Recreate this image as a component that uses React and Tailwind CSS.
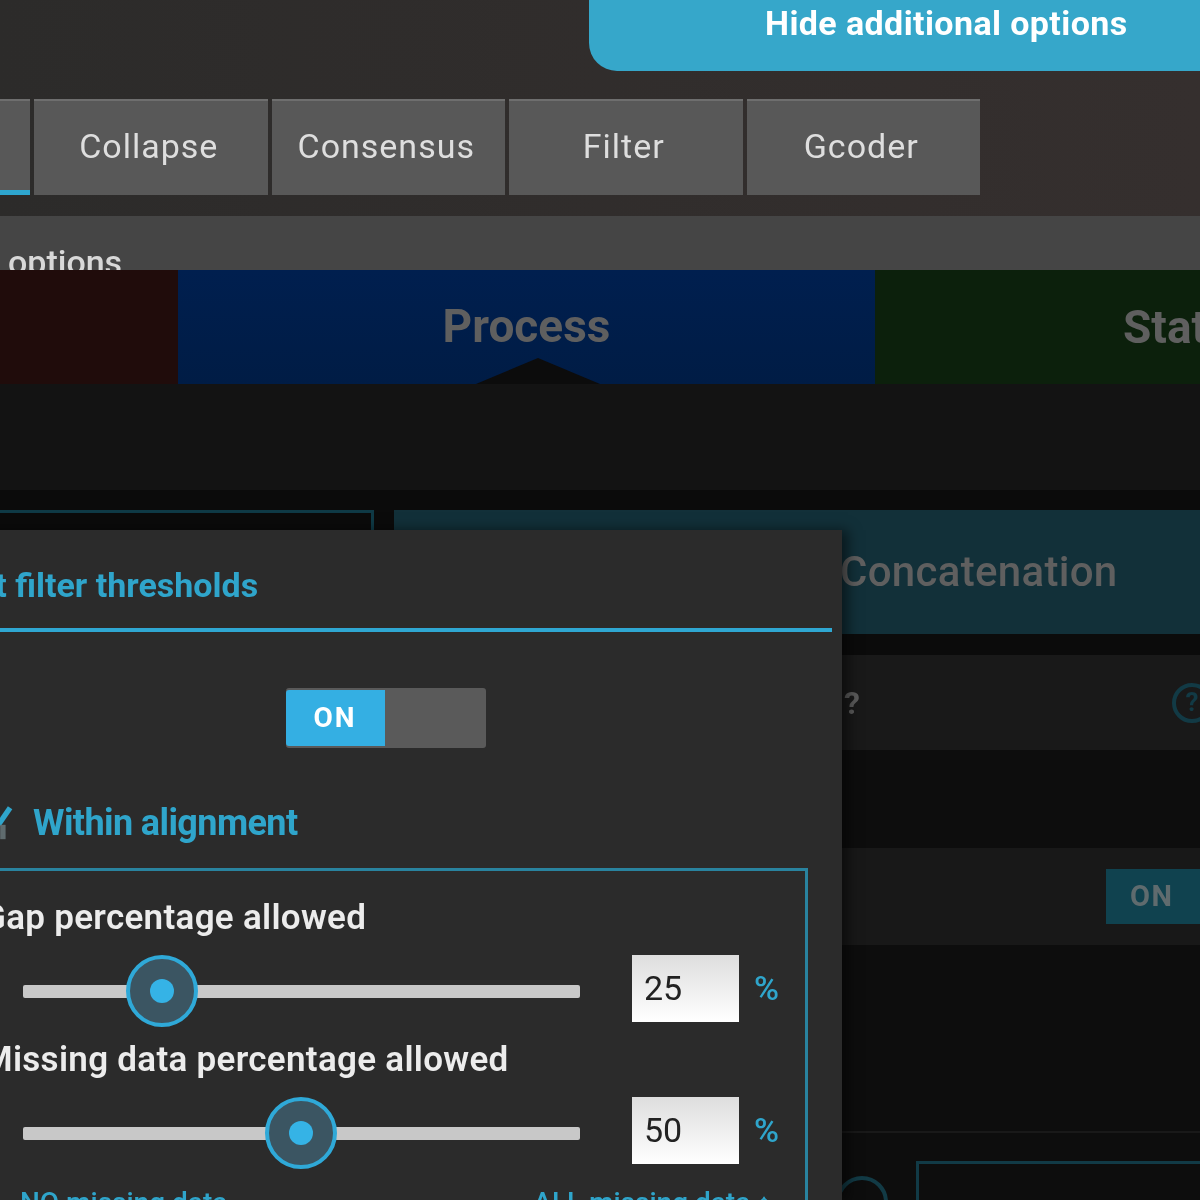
import React from "react";

const font = { fontFamily: "Roboto, sans-serif" };

function Tab({ label, active, first }) {
  return (
    <div className={`relative flex h-[96px] w-[233.5px] shrink-0 items-center justify-center border-t-2 border-t-[#6e6e6e] bg-[#585858] pb-[3px] pr-[4px] text-[34px] tracking-[1px] text-[#dedede] ${first ? "ml-[-203.5px]" : ""}`}>
      {label}
      {active && <div className="absolute inset-x-0 bottom-0 h-[5px] bg-[#2ea6cf]" />}
    </div>
  );
}

function Slider({ thumb, value }) {
  return (
    <div className="flex h-[72px] items-center">
      <div className="relative ml-[92px] h-[13px] w-[557px] rounded-[2px] bg-[#c8c8c8]">
        <div
          className="absolute top-1/2 flex h-[72px] w-[72px] -translate-x-1/2 -translate-y-1/2 items-center justify-center rounded-full border-[4px] border-[#2fa9d8] bg-[#3b5562]"
          style={{ left: thumb }}
        >
          <div className="h-[24px] w-[24px] rounded-full bg-[#35b3e6]" />
        </div>
      </div>
      <div className="mb-[6px] ml-[52px] flex h-[67px] w-[107px] items-center bg-gradient-to-b from-[#dedede] to-white pl-[12px] text-[34px] text-[#222]">
        {value}
      </div>
      <div className="mb-[6px] ml-[15px] text-[34px] font-medium text-[#2fa5cb]">%</div>
    </div>
  );
}

export default function App() {
  return (
    <div className="relative h-[1200px] w-[1200px] overflow-hidden bg-[#0d0d0d] blur-[0.7px]" style={font}>
      {/* top bar */}
      <div className="h-[216px] bg-gradient-to-r from-[#2c2b2a] to-[#352f2e]">
        <div className="flex h-[71px] justify-end">
          <div className="flex w-[611px] items-center rounded-bl-[28px] bg-[#36a7ca] pb-[24px] pl-[176px] text-[34px] font-bold text-white">
            <span className="tracking-[0.4px]">Hide additional options</span>
          </div>
        </div>
        <div className="mt-[28px] flex gap-[4px]">
          <Tab label="Align" active first />
          <Tab label="Collapse" />
          <Tab label="Consensus" />
          <Tab label="Filter" />
          <Tab label="Gcoder" />
        </div>
      </div>

      {/* grey band */}
      <div className="h-[54px] overflow-hidden bg-[#454545] pl-[8px] pt-[26px] text-[34px] font-medium leading-[40px] text-[#d8d8d8]">
        options
      </div>

      {/* section bar */}
      <div className="flex h-[114px] text-[46px] font-bold text-[#5f5f5f]">
        <div className="w-[178px] shrink-0 bg-[#200c0b]" />
        <div className="relative flex w-[697px] shrink-0 items-center justify-center bg-gradient-to-b from-[#001f4f] to-[#001c45] pb-[2px]">
          Process
          <div className="absolute bottom-0 left-[298px] h-0 w-0 border-x-[62px] border-b-[26px] border-x-transparent border-b-[#0c0c0c]" />
        </div>
        <div className="min-w-0 flex-1 overflow-hidden whitespace-nowrap bg-[#0c200c] pl-[248px] pt-[28px] leading-[58px]">Statistics</div>
      </div>

      {/* dimmed content */}
      <div className="h-[106px] bg-[#131313]" />
      <div className="flex h-[606px] gap-[20px] bg-[#0b0b0b] pt-[20px]">
        <div className="h-[200px] w-[374px] shrink-0 border-r-[3px] border-t-[3px] border-[#0f3a46]" />
        <div className="min-w-0 flex-1">
          <div className="flex h-[124px] items-center bg-[#123039] pb-[2px] pl-[446px] text-[42px] font-medium tracking-[0.3px] text-[#5f5f5f]">
            Concatenation
          </div>
          <div className="mt-[21px] flex h-[95px] items-center justify-between bg-[#191919] pl-[450px] text-[32px] font-bold text-[#5a5a5a]">
            <span>?</span>
            <div className="mr-[-12px] flex h-[40px] w-[40px] items-center justify-center rounded-full border-[4px] border-[#123a45] text-[26px] text-[#123a45]">?</div>
          </div>
          <div className="h-[98px] bg-[#0d0d0d]" />
          <div className="flex h-[97px] items-start justify-end bg-[#181818] pt-[21px]">
            <div className="flex h-[55px] w-[94px] items-center bg-[#10424f] pl-[24px] text-[29px] font-bold tracking-[1.5px] text-[#5f6b6e]">ON</div>
          </div>
          <div className="h-[188px] border-b-[2px] border-b-[#191919] bg-[#0d0d0d]" />
          <div className="mt-[28px] flex items-start pl-[442px]">
            <div className="mt-[15px] h-[52px] w-[52px] shrink-0 rounded-full border-[4px] border-[#123a45]" />
            <div className="ml-[28px] h-[60px] flex-1 border-l-[3px] border-t-[3px] border-[#113a46]" />
          </div>
        </div>
      </div>

      {/* modal */}
      <div className="absolute left-[-100px] top-[530px] h-[670px] w-[942px] bg-[#2b2b2b] pl-[31px] pr-[10px] shadow-[6px_0_12px_rgba(0,0,0,0.5)]">
        <div className="flex h-[102px] items-end border-b-[4px] border-[#2fa7d2] pb-[17px] text-[34px] font-bold text-[#2fa5cb]">
          <span className="pl-[25px]">Set filter thresholds</span>
        </div>
        <div className="flex justify-center pr-[23px] pt-[56px]">
          <div className="ml-[31px] flex h-[60px] w-[200px] rounded-[3px] bg-[#5a5a5a]">
            <div className="my-[2px] flex w-[99px] items-center justify-center rounded-l-[3px] bg-[#34afe3] text-[28px] font-bold tracking-[2px] text-white">ON</div>
          </div>
        </div>
        <div className="flex h-[120px] items-center pl-[53px] pt-[30px] text-[36px] font-bold tracking-[-0.6px] text-[#2fa5cb]">
          <svg viewBox="0 0 40 40" className="mr-[13px] h-[40px] w-[36px] shrink-0" fill="none" stroke="#2fa5cb" strokeWidth="6">
            <path d="M16 22L29 3" />
            <path d="M21 38V22" stroke="#5f6b6e" />
          </svg>
          Within alignment
        </div>
        <div className="h-[400px] w-[877px] border-r-[3px] border-t-[3px] border-[#29839f] pt-[24px]">
          <div className="flex h-[46px] items-center pl-[51px] text-[35px] font-semibold tracking-[0.3px] text-[#ececec]">Gap percentage allowed</div>
          <div className="mt-[14px]"><Slider thumb="139px" value="25" /></div>
          <div className="mt-[10px] flex h-[46px] items-center pl-[51px] text-[35px] font-semibold tracking-[0.3px] text-[#ececec]">Missing data percentage allowed</div>
          <div className="mt-[14px]"><Slider thumb="278px" value="50" /></div>
          <div className="mt-[13px] flex gap-[306px] pl-[89px] text-[28px] font-medium text-[#2fa5cb]">
            <span>NO missing data</span>
            <span>ALL missing data ↑</span>
          </div>
        </div>
      </div>
    </div>
  );
}
